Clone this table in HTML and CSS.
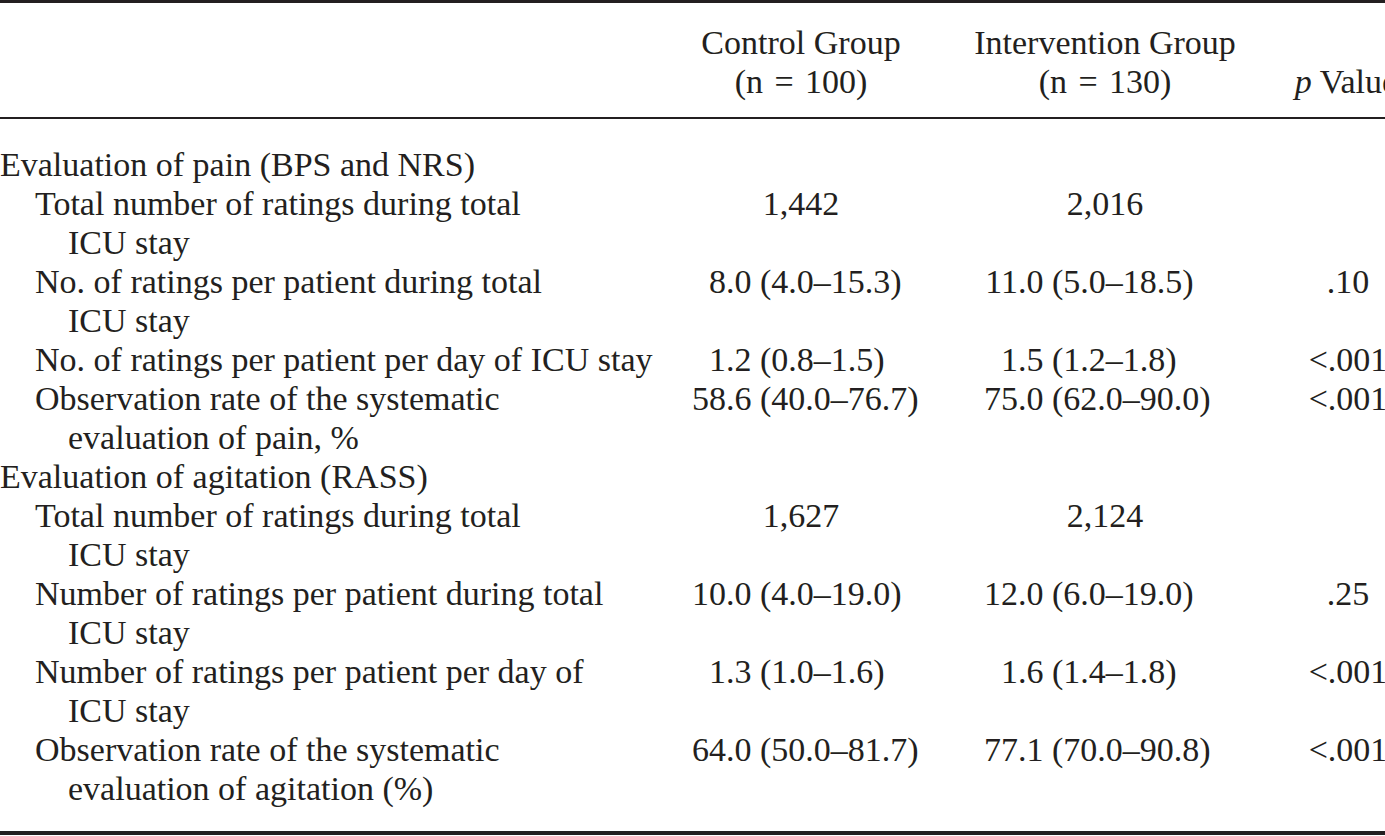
FILE: index.html
```html
<!DOCTYPE html>
<html lang="en">
<head>
<meta charset="utf-8">
<title>Evaluation of pain and agitation</title>
<link rel="stylesheet" href="styles.css">
</head>
<body>
<table class="data">
  <colgroup>
    <col class="c-label">
    <col class="c-ctrl">
    <col class="c-int">
    <col class="c-p">
  </colgroup>
  <thead>
    <tr>
      <th class="h-label"></th>
      <th>Control Group<br>(n&#8196;=&#8196;100)</th>
      <th>Intervention Group<br>(n&#8196;=&#8196;130)</th>
      <th class="h-p"><i>p</i> Value</th>
    </tr>
  </thead>
  <tbody>
    <tr class="first">
      <td class="group">Evaluation of pain (BPS and NRS)</td>
      <td></td><td></td><td></td>
    </tr>
    <tr>
      <td class="item">Total number of ratings during total<br>ICU stay</td>
      <td class="count">1,442</td>
      <td class="count">2,016</td>
      <td class="pv"></td>
    </tr>
    <tr>
      <td class="item">No. of ratings per patient during total<br>ICU stay</td>
      <td class="num ctrl"><span class="est">8.0</span> (4.0–15.3)</td>
      <td class="num int"><span class="est">11.0</span> (5.0–18.5)</td>
      <td class="pv">.10</td>
    </tr>
    <tr>
      <td class="item">No. of ratings per patient per day of ICU stay</td>
      <td class="num ctrl"><span class="est">1.2</span> (0.8–1.5)</td>
      <td class="num int"><span class="est">1.5</span> (1.2–1.8)</td>
      <td class="pv">&lt;.001</td>
    </tr>
    <tr>
      <td class="item">Observation rate of the systematic<br>evaluation of pain, %</td>
      <td class="num ctrl"><span class="est">58.6</span> (40.0–76.7)</td>
      <td class="num int"><span class="est">75.0</span> (62.0–90.0)</td>
      <td class="pv">&lt;.001</td>
    </tr>
    <tr>
      <td class="group">Evaluation of agitation (RASS)</td>
      <td></td><td></td><td></td>
    </tr>
    <tr>
      <td class="item">Total number of ratings during total<br>ICU stay</td>
      <td class="count">1,627</td>
      <td class="count">2,124</td>
      <td class="pv"></td>
    </tr>
    <tr>
      <td class="item">Number of ratings per patient during total<br>ICU stay</td>
      <td class="num ctrl"><span class="est">10.0</span> (4.0–19.0)</td>
      <td class="num int"><span class="est">12.0</span> (6.0–19.0)</td>
      <td class="pv">.25</td>
    </tr>
    <tr>
      <td class="item">Number of ratings per patient per day of<br>ICU stay</td>
      <td class="num ctrl"><span class="est">1.3</span> (1.0–1.6)</td>
      <td class="num int"><span class="est">1.6</span> (1.4–1.8)</td>
      <td class="pv">&lt;.001</td>
    </tr>
    <tr class="last">
      <td class="item">Observation rate of the systematic<br>evaluation of agitation (%)</td>
      <td class="num ctrl"><span class="est">64.0</span> (50.0–81.7)</td>
      <td class="num int"><span class="est">77.1</span> (70.0–90.8)</td>
      <td class="pv">&lt;.001</td>
    </tr>
  </tbody>
</table>
</body>
</html>
```

FILE: styles.css
```css
html {
  overflow: hidden;
  background: #ffffff;
}

body {
  margin: 0;
  background: #ffffff;
  color: #231f20;
  font-family: "Liberation Serif", "Times New Roman", serif;
  font-size: 34px;
  line-height: 39px;
}

.data {
  border-collapse: collapse;
  table-layout: fixed;
  width: 1438px;
  border-top: 3px solid #231f20;
  border-bottom: 4px solid #231f20;
}

.c-label { width: 650px; }
.c-ctrl { width: 302px; }
.c-int { width: 306px; }
.c-p { width: 180px; }

.data th {
  font-weight: normal;
  text-align: center;
  vertical-align: bottom;
  padding: 20px 0 16px 0;
  border-bottom: 2px solid #231f20;
  white-space: nowrap;
}

.data th.h-p {
  padding-right: 4px;
}

.data td {
  padding: 0;
  vertical-align: top;
  white-space: nowrap;
}

.data tr.first td {
  padding-top: 26px;
}

.data tr.last td {
  padding-bottom: 23px;
}

.data td.group {
  padding-left: 0;
}

.data td.item {
  padding-left: 68px;
  text-indent: -33px;
}

.data td.count {
  text-align: center;
}

.data td.num {
  text-align: left;
}

.data td.ctrl {
  padding-left: 42px;
}

.data td.int {
  padding-left: 32px;
}

.est {
  display: inline-block;
  width: 1.75em;
  text-align: right;
}

.data td.pv {
  text-align: center;
}
```
